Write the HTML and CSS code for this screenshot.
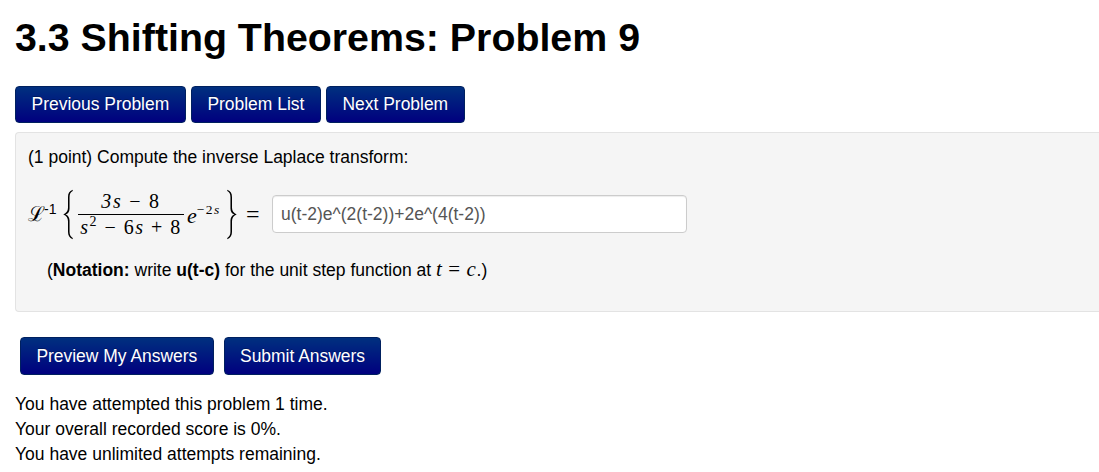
FILE: index.html
```html
<!DOCTYPE html>
<html lang="en">
<head>
<meta charset="utf-8">
<title>3.3 Shifting Theorems: Problem 9</title>
<link rel="stylesheet" href="styles.css">
</head>
<body>
<h1 class="title">3.3 Shifting Theorems: Problem 9</h1>
<nav class="nav">
  <a class="btn">Previous Problem</a>
  <a class="btn">Problem List</a>
  <a class="btn">Next Problem</a>
</nav>
<section class="problem">
  <p class="intro">(1 point) Compute the inverse Laplace transform:</p>
  <div class="eq">
    <span class="math-l">ℒ</span><span class="sup-1">-1</span>
    <svg class="brace" viewBox="0 0 14 50" preserveAspectRatio="none" aria-hidden="true"><path d="M12.5 .8C8.5 2 7 4.5 7 8V18.5C7 21.5 5 24 1.5 25C5 26 7 28.5 7 31.5V42C7 45.5 8.5 48 12.5 49.2V48C10 46.8 8.8 45 8.8 42V31C8.8 28 7 25.8 4.2 25C7 24.2 8.8 22 8.8 19V8C8.8 5 10 3.2 12.5 2Z"/></svg>
    <span class="frac">
      <span class="num"><i>3s</i> − 8</span>
      <span class="den"><i>s</i><sup>2</sup> − 6<i>s</i> + 8</span>
    </span>
    <span class="exp"><i>e</i><sup>−2<i>s</i></sup></span>
    <svg class="brace flip" viewBox="0 0 14 50" preserveAspectRatio="none" aria-hidden="true"><path d="M12.5 .8C8.5 2 7 4.5 7 8V18.5C7 21.5 5 24 1.5 25C5 26 7 28.5 7 31.5V42C7 45.5 8.5 48 12.5 49.2V48C10 46.8 8.8 45 8.8 42V31C8.8 28 7 25.8 4.2 25C7 24.2 8.8 22 8.8 19V8C8.8 5 10 3.2 12.5 2Z"/></svg>
    <span class="equals">=</span>
    <input class="answer" type="text" value="u(t-2)e^(2(t-2))+2e^(4(t-2))">
  </div>
  <p class="note">(<b>Notation:</b> write <b>u(t-c)</b> for the unit step function at <span class="inline-math"><i>t</i> = <i>c</i></span>.)</p>
</section>
<div class="actions">
  <button class="btn" type="button">Preview My Answers</button>
  <button class="btn" type="button">Submit Answers</button>
</div>
<div class="status">
  <div>You have attempted this problem 1 time.</div>
  <div>Your overall recorded score is 0%.</div>
  <div>You have unlimited attempts remaining.</div>
</div>
</body>
</html>
```

FILE: styles.css
```css
html, body { margin: 0; padding: 0; background: #fff; overflow: hidden; }
body {
  font-family: "Liberation Sans", Arial, sans-serif;
  font-size: 17.5px;
  line-height: 25px;
  color: #000;
  padding-left: 15px;
  height: 472px;
  box-sizing: border-box;
}
.title {
  margin: 0;
  padding-top: 14px;
  font-size: 39.35px;
  line-height: 46px;
  font-weight: 700;
}
.nav { display: flex; gap: 5px; margin-top: 26px; }
.btn {
  display: block;
  box-sizing: border-box;
  height: 37px;
  padding: 0 15.6px;
  font: 17.45px/34px "Liberation Sans", Arial, sans-serif;
  color: #fff;
  background: linear-gradient(#00307f, #00007f);
  border: 1px solid #00205f;
  border-radius: 4px;
  text-shadow: 0 -1px 0 rgba(0,0,0,.25);
}
.problem {
  box-sizing: border-box;
  margin-top: 9px;
  height: 180px;
  padding: 12px 12px 0;
  background: #f5f5f5;
  border: 1px solid #e3e3e3;
  border-right: 0;
  border-radius: 4px 0 0 4px;
}
.intro { margin: 0; }
.eq {
  display: flex;
  align-items: center;
  width: 659px;
  height: 62px;
  margin-top: 13px;
  font-family: "Liberation Serif", "Times New Roman", serif;
  font-size: 20px;
}
.math-l {
  font-family: "DejaVu Serif", serif;
  font-size: 20.5px;
  width: 16px;
  flex: none;
}
.sup-1 {
  font-family: "Liberation Sans", sans-serif;
  font-size: 14px;
  line-height: 14px;
  width: 14px;
  margin-top: -10px;
  flex: none;
}
.brace { width: 12px; height: 51px; margin-left: 4px; flex: none; }
.brace.flip { transform: scaleX(-1); margin-left: 1px; }
.frac { display: inline-flex; flex-direction: column; align-items: center; margin-left: 4px; width: 106px; flex: none; }
.num { line-height: 25px; height: 25px; width: 100%; text-align: center; border-bottom: 1px solid #000; letter-spacing: 1.7px; }
.den { line-height: 25px; height: 25px; white-space: nowrap; letter-spacing: 1.5px; }
.den sup { font-size: 14px; line-height: 0; }
.exp { width: 38px; margin-left: 3px; margin-top: 2px; white-space: nowrap; flex: none; font-size: 22px; }
.exp sup { font-size: 13.5px; line-height: 0; vertical-align: 9px; letter-spacing: 1.4px; }
.equals { font-size: 24px; margin-left: 8px; }
.answer {
  box-sizing: border-box;
  width: 415px;
  height: 38px;
  margin-left: auto;
  padding: 0 8px;
  font: 17.5px "Liberation Sans", Arial, sans-serif;
  color: #555;
  background: #fff;
  border: 1px solid #ccc;
  border-radius: 4px;
  box-shadow: inset 0 1px 1px rgba(0,0,0,.075);
}
.note { margin: 12px 0 0 19px; }
.inline-math { font-family: "Liberation Serif", serif; font-size: 21px; letter-spacing: .6px; }
.actions { display: flex; gap: 10px; margin: 25px 0 0 5px; }
button.btn { height: 38px; line-height: 35px; padding: 0 15.4px; cursor: pointer; }
.status { margin-top: 17px; }
```
